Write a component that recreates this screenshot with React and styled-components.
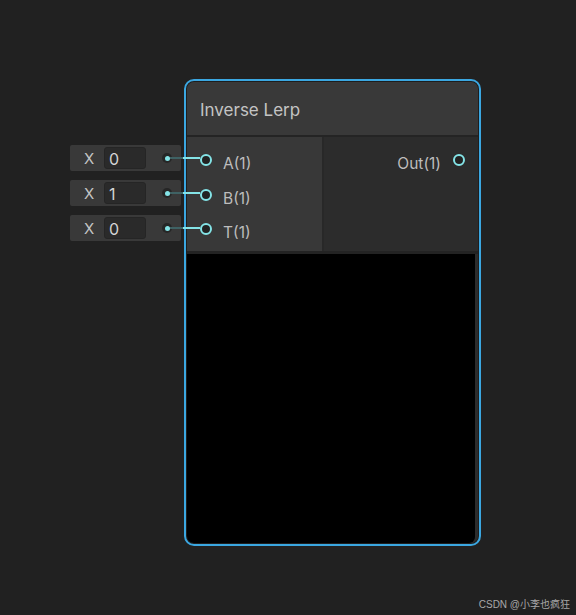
import React from 'react'
import styled, { createGlobalStyle } from 'styled-components'

const GlobalStyle = createGlobalStyle`
  html, body {
    margin: 0;
    padding: 0;
    background-color: #212121;
  }
  * {
    box-sizing: border-box;
  }
`;

const Page = styled.div`
  height: 100vh;
  display: flex;
  flex-direction: column;
  font-family: 'Inter', 'Noto Sans', sans-serif;
  background-color: #212121;
  overflow: hidden;
`;

const Canvas = styled.div`
  flex: 1;
  display: flex;
  align-items: flex-start;
  gap: 3px;
  padding: 79px 0 0 70px;
`;

const InputStack = styled.div`
  margin-top: 66px;
  width: 111px;
  display: flex;
  flex-direction: column;
  gap: 9px;
`;

const Slot = styled.div`
  position: relative;
  height: 26px;
  display: flex;
  align-items: center;
  padding-left: 14px;
  background-color: #393939;
  border-radius: 2px;
  .wire {
    position: absolute;
    left: 100px;
    top: 50%;
    width: 30px;
    height: 2px;
    margin-top: -1px;
    background: linear-gradient(to right, #3f6264 0 13px, #84e4e7 13px);
    z-index: 2;
  }
`;

const AxisLabel = styled.span`
  width: 20px;
  font-size: 15px;
  color: #c4c4c4;
`;

const Field = styled.div`
  width: 42px;
  height: 22px;
  display: flex;
  align-items: center;
  padding: 1px 0 0 4px;
  background-color: #2a2a2a;
  border: 1px solid #252525;
  border-radius: 3px;
  font-size: 16px;
  color: #d4d4d4;
`;

const Dot = styled.span`
  width: 10px;
  height: 10px;
  margin-left: 16px;
  display: flex;
  align-items: center;
  justify-content: center;
  border-radius: 50%;
  background-color: #262626;
  &::after {
    content: '';
    width: 5px;
    height: 5px;
    border-radius: 50%;
    background-color: #84e4e7;
  }
`;

const Node = styled.div`
  width: 297px;
  height: 467px;
  padding: 1px;
  border: 2px solid #3ba7e1;
  border-radius: 10px;
  background-color: #1e1e1e;
`;

const NodeBody = styled.div`
  height: 100%;
  display: flex;
  flex-direction: column;
  border-radius: 7px;
  overflow: hidden;
  background-color: #2c2c2c;
`;

const Header = styled.div`
  height: 55px;
  flex-shrink: 0;
  display: flex;
  align-items: center;
  padding: 2px 13px 0;
  background-color: #393939;
  border-bottom: 2px solid #242424;
  font-size: 17px;
  color: #c4c4c4;
`;

const Ports = styled.div`
  height: 117px;
  flex-shrink: 0;
  display: flex;
  border-bottom: 3px solid #232323;
`;

const InputCol = styled.div`
  width: 137px;
  padding-top: 6px;
  display: flex;
  flex-direction: column;
  background-color: #383838;
  border-right: 2px solid #282828;
`;

const OutputCol = styled.div`
  flex: 1;
  padding: 6px 13px 0 0;
  display: flex;
  flex-direction: column;
  align-items: flex-end;
  background-color: #2c2c2c;
`;

const PortRow = styled.div`
  height: 34.5px;
  display: flex;
  align-items: center;
  gap: ${p => (p.$out ? '12px' : '11px')};
  padding-left: ${p => (p.$out ? '0' : '13px')};
`;

const PortCircle = styled.span`
  width: 12px;
  height: 12px;
  flex-shrink: 0;
  border: 2px solid #84e4e7;
  border-radius: 50%;
  background-color: #222;
`;

const PortLabel = styled.span`
  padding-top: 7px;
  font-size: 15.5px;
  color: #bdbdbd;
`;

const Preview = styled.div`
  flex: 1;
  margin-right: 3px;
  background-color: #000;
  border-bottom-right-radius: 6px;
`;

const Footer = styled.div`
  display: flex;
  justify-content: flex-end;
  padding: 0 6px 4px 0;
  font-family: 'Liberation Sans', 'Noto Sans CJK SC', sans-serif;
  font-size: 10px;
  color: #a8a8a8;
`;

const inputs = [
  { axis: 'X', value: '0', port: 'A(1)' },
  { axis: 'X', value: '1', port: 'B(1)' },
  { axis: 'X', value: '0', port: 'T(1)' },
]

function App() {
  return (
    <>
      <GlobalStyle />
      <Page>
        <Canvas>
          <InputStack>
            {inputs.map((inp, i) => (
              <Slot key={i}>
                <AxisLabel>{inp.axis}</AxisLabel>
                <Field>{inp.value}</Field>
                <Dot />
                <span className="wire" />
              </Slot>
            ))}
          </InputStack>
          <Node>
            <NodeBody>
              <Header>Inverse Lerp</Header>
              <Ports>
                <InputCol>
                  {inputs.map((inp, i) => (
                    <PortRow key={i}>
                      <PortCircle />
                      <PortLabel>{inp.port}</PortLabel>
                    </PortRow>
                  ))}
                </InputCol>
                <OutputCol>
                  <PortRow $out>
                    <PortLabel>Out(1)</PortLabel>
                    <PortCircle />
                  </PortRow>
                </OutputCol>
              </Ports>
              <Preview />
            </NodeBody>
          </Node>
        </Canvas>
        <Footer>CSDN @小李也疯狂</Footer>
      </Page>
    </>
  )
}

export default App
